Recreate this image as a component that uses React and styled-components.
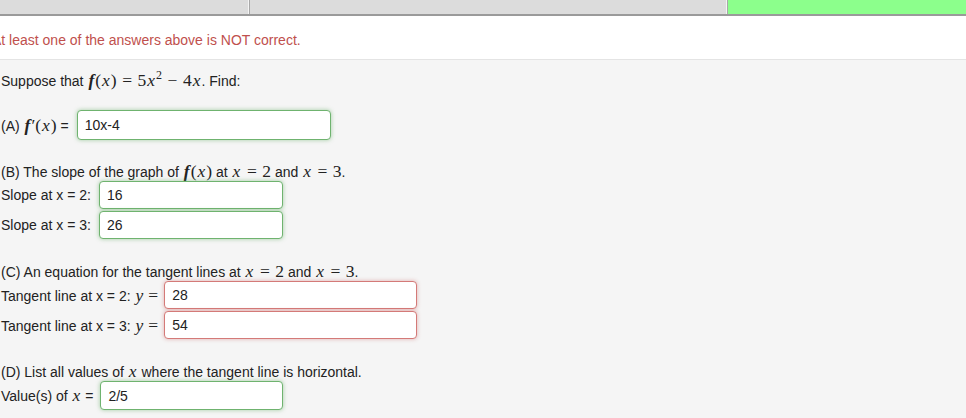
import React from "react";
import styled, { createGlobalStyle } from "styled-components";

const Global = createGlobalStyle`
  html, body { margin: 0; padding: 0; background: #f5f5f5; overflow: hidden; }
  body { font-family: Arial, "Liberation Sans", sans-serif; font-size: 14px; color: #222; }
`;

const Page = styled.div`
  width: 966px;
  height: 418px;
  display: flex;
  flex-direction: column;
  background: #f5f5f5;
`;

const TopBar = styled.div`
  display: flex;
  height: 14px;
  border-bottom: 2px solid #9a9a9a;
`;

const Cell = styled.div`
  width: ${(p) => p.w}px;
  flex: ${(p) => (p.grow ? 1 : "none")};
  background: ${(p) => p.bg};
  border-right: ${(p) => (p.sep ? "1px solid #a8a8a8" : "none")};
  box-shadow: ${(p) => (p.sep ? "inset -1px 0 0 #f4f4f4" : "none")};
`;

const MessageBar = styled.div`
  background: #fff;
  border-bottom: 1px solid #e4e4e4;
  padding-top: 14px;
  box-sizing: border-box;
  height: 44px;
  overflow: hidden;
`;

const Message = styled.div`
  color: #c0504d;
  line-height: 20px;
  margin-left: -8px;
  white-space: nowrap;
`;

const Content = styled.div`
  padding: 10px 0 0 1px;
  display: flex;
  flex-direction: column;
`;

const Line = styled.div`
  line-height: 20px;
  height: 20px;
  margin-top: ${(p) => p.mt || 0}px;
  white-space: nowrap;
`;

const Row = styled.div`
  display: flex;
  align-items: center;
  gap: ${(p) => p.gap ?? 6}px;
  margin-top: ${(p) => p.mt || 0}px;
  white-space: nowrap;
`;

const Field = styled.div`
  width: ${(p) => p.w}px;
  height: ${(p) => p.h || 28}px;
  box-sizing: border-box;
  background: #fff;
  border-radius: 4px;
  border: 1px solid ${(p) => (p.ok ? "#6fb36f" : "#d47a78")};
  box-shadow: ${(p) =>
    p.ok
      ? "0 0 4px rgba(92, 170, 92, 0.55)"
      : "0 0 4px rgba(200, 90, 88, 0.45)"};
  padding: 0 7px;
  display: flex;
  align-items: center;
  font-size: 14px;
  color: #222;
`;

const M = styled.span`
  font-family: "Liberation Serif", "DejaVu Serif", serif;
  font-size: 17.5px;
  font-style: ${(p) => (p.up ? "normal" : "italic")};
  font-weight: ${(p) => (p.b ? 600 : "normal")};
  padding: ${(p) => (p.up ? "0" : "0 1px")};
`;

const Op = styled.span`
  font-family: "Liberation Serif", "DejaVu Serif", serif;
  font-size: 17.5px;
  margin: 0 ${(p) => p.m ?? 5.5}px;
`;

const Sup = styled.sup`
  font-family: "Liberation Serif", serif;
  font-size: 12px;
  vertical-align: 7px;
  line-height: 0;
`;

export default function App() {
  return (
    <Page>
      <Global />
      <TopBar>
        <Cell w={249} bg="#dcdcdc" sep />
        <Cell w={477} bg="#dcdcdc" sep />
        <Cell grow bg="#8cff8c" />
      </TopBar>
      <MessageBar>
        <Message>At least one of the answers above is NOT correct.</Message>
      </MessageBar>
      <Content>
        <Line>
          Suppose that <M b>f</M><M up>(</M><M>x</M><M up>)</M>
          <Op>=</Op>
          <M up>5</M><M>x</M><Sup>2</Sup>
          <Op>−</Op>
          <M up>4</M><M>x</M>. Find:
        </Line>
        <Row mt={20} gap={8}>
          <span>
            (A) <M b>f</M><M up>′(</M><M>x</M><M up>)</M> =
          </span>
          <Field ok w={254} h={30}>10x-4</Field>
        </Row>
        <Line mt={21}>
          (B) The slope of the graph of <M b>f</M><M up>(</M><M>x</M><M up>)</M> at <M>x</M>
          <Op>=</Op>
          <M up>2</M> and <M>x</M>
          <Op>=</Op>
          <M up>3</M>.
        </Line>
        <Row gap={8}>
          <span>Slope at x = 2:</span>
          <Field ok w={184}>16</Field>
        </Row>
        <Row mt={2} gap={8}>
          <span>Slope at x = 3:</span>
          <Field ok w={184}>26</Field>
        </Row>
        <Line mt={22}>
          (C) An equation for the tangent lines at <M>x</M>
          <Op>=</Op>
          <M up>2</M> and <M>x</M>
          <Op>=</Op>
          <M up>3</M>.
        </Line>
        <Row gap={2}>
          <span>
            Tangent line at x = 2: <M>y</M>
            <Op m={4}>=</Op>
          </span>
          <Field w={253}>28</Field>
        </Row>
        <Row mt={2} gap={2}>
          <span>
            Tangent line at x = 3: <M>y</M>
            <Op m={4}>=</Op>
          </span>
          <Field w={253}>54</Field>
        </Row>
        <Line mt={22}>
          (D) List all values of <M>x</M> where the tangent line is horizontal.
        </Line>
        <Row gap={7}>
          <span>
            Value(s) of <M>x</M> =
          </span>
          <Field ok w={183} h={29}>2/5</Field>
        </Row>
      </Content>
    </Page>
  );
}
